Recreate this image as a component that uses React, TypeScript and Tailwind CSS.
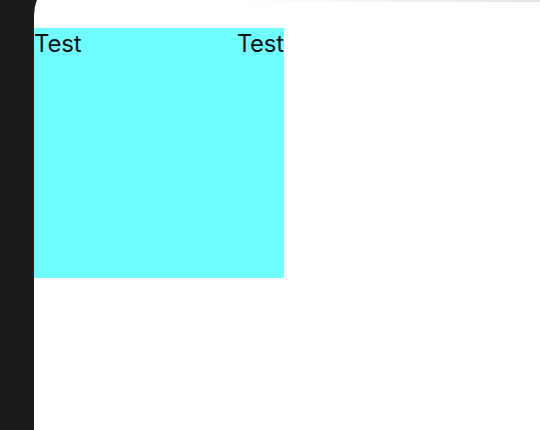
export default function App() {
  return (
    <div className="flex h-[430px] w-[540px] overflow-hidden bg-[#1b1b1b]">
      <div className="w-[34px] shrink-0 bg-[#1b1b1b]" />
      <div className="-mt-[25px] flex h-[455px] flex-1 flex-col rounded-tl-[40px] bg-white">
        <div className="mt-[25px] ml-[206px] h-[2px] bg-gradient-to-r from-white to-[#e4e4e4]" />
        <div className="mt-[26px] flex h-[250px] w-[250px] items-start justify-between bg-[#6ffeff] font-['Inter',sans-serif] text-[24px] leading-[32px] tracking-[-0.2px] text-[#111]">
          <span>Test</span>
          <span>Test</span>
        </div>
      </div>
    </div>
  );
}
